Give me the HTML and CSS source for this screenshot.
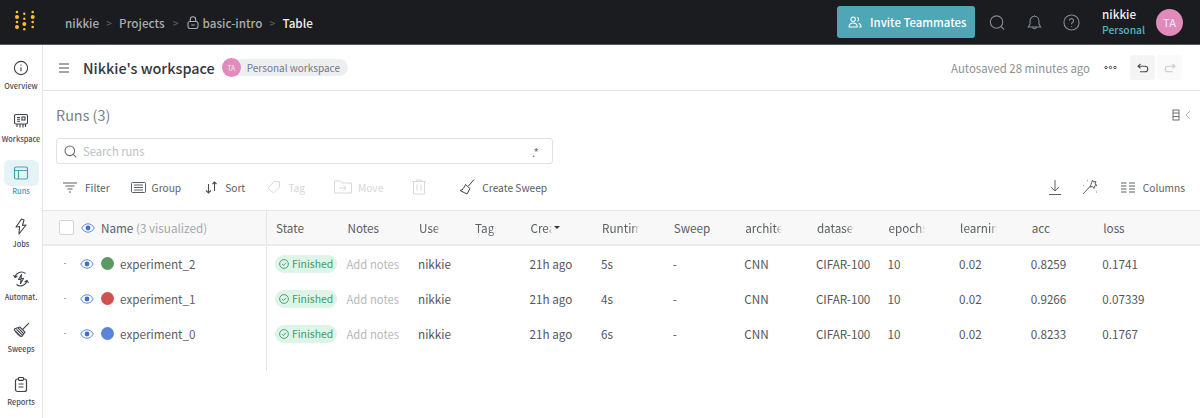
FILE: index.html
```html
<!DOCTYPE html>
<html lang="en">
<head>
  <meta charset="UTF-8">
  <title>basic-intro - Table</title>
  <link rel="stylesheet" href="styles.css">
</head>
<body>
  <header class="topbar">
    <svg class="logo" width="24" height="24" viewBox="0 0 24 24" fill="#fbc02d">
      <circle cx="4" cy="2" r="1.300"/><circle cx="4" cy="7" r="2"/><circle cx="4" cy="12" r="1.300"/><circle cx="4" cy="17" r="2"/>
      <circle cx="11.300" cy="3.700" r="1.200"/><circle cx="11.300" cy="8.700" r="1.200"/><circle cx="11.300" cy="14" r="2"/><circle cx="11.300" cy="19.300" r="1.200"/>
      <circle cx="19.700" cy="2" r="1.300"/><circle cx="19.700" cy="7" r="2"/><circle cx="19.700" cy="12" r="1.300"/><circle cx="19.700" cy="17" r="1.300"/>
    </svg>
    <nav class="crumbs">
      <span>nikkie</span><i class="sep">&gt;</i>
      <span>Projects</span><i class="sep sep-lock">&gt;</i>
      <svg width="12" height="13" viewBox="0 0 12 13" fill="none" stroke="#a9adb3" stroke-width="1.100"><rect x="1" y="5.500" width="10" height="7" rx="2"/><path d="M3.300 5.500V3.500a2.700 2.700 0 0 1 5.400 0v2M4.300 9h3.400"/></svg>
      <span class="crumb-project">basic-intro</span><i class="sep">&gt;</i>
      <b>Table</b>
    </nav>
    <div class="top-right">
      <button class="invite">
        <svg width="14" height="12" viewBox="0 0 15 13" fill="none" stroke="#fff" stroke-width="1.100"><circle cx="5.500" cy="3.500" r="2.400"/><path d="M1 12c0-3 2-4.500 4.500-4.500S10 9 10 12zM10 1.400a2.300 2.300 0 0 1 0 4.300M11.500 7.800c1.500.6 2.500 2 2.500 4.200h-2"/></svg>
        Invite Teammates
      </button>
      <svg class="search-top" width="16" height="17" viewBox="0 0 18 18" fill="none" stroke="#85898f" stroke-width="1.300"><circle cx="8.500" cy="8.500" r="7"/><path d="M13.500 13.500l3.500 3.500"/></svg>
      <svg class="bell-top" width="15" height="17" viewBox="0 0 17 18" fill="none" stroke="#85898f" stroke-width="1.200"><path d="M8.500 2a5 5 0 0 0-5 5v3.500L1.500 14h14l-2-3.500V7a5 5 0 0 0-5-5zM8.500 2V.8M6.300 14.500a2.300 2.300 0 0 0 4.400 0"/></svg>
      <svg class="help-top" width="17" height="17" viewBox="0 0 18 18" fill="none" stroke="#85898f" stroke-width="1.200"><circle cx="9" cy="9" r="8"/><path d="M6.800 7a2.200 2.200 0 1 1 3.300 2c-.8.500-1.100.9-1.100 1.800M9 12.600v1"/></svg>
      <div class="user">
        <div class="user-name">nikkie</div>
        <div class="user-team">Personal</div>
      </div>
      <div class="avatar">TA</div>
    </div>
  </header>

  <div class="layout">
    <aside class="sidebar">
      <a class="side-item">
        <div class="side-icon"><svg width="16" height="16" viewBox="0 0 16 16" fill="none" stroke="#3e4248" stroke-width="1.100"><circle cx="8" cy="8" r="6.600"/><path d="M8 7.200v4M8 4.600v1.100"/></svg></div>
        <span>Overview</span>
      </a>
      <a class="side-item">
        <div class="side-icon"><svg width="16" height="16" viewBox="0 0 16 16" fill="none" stroke="#3e4248" stroke-width="1.100"><rect x="1.500" y="1.500" width="13" height="9.500" rx="1.500"/><path d="M4 4.500h3M4 6.300h3M4 8.200h3"/><rect x="9" y="4" width="3" height="3"/><path d="M4 11v3M7 11v3.500M10 11v3.500M12.500 11v3"/></svg></div>
        <span>Workspace</span>
      </a>
      <a class="side-item side-active">
        <div class="side-icon"><svg width="16" height="16" viewBox="0 0 16 16" fill="none" stroke="#4aa3b3" stroke-width="1.200"><rect x="1.500" y="2" width="13" height="12" rx="1.500"/><path d="M1.500 5.500h13M5.500 5.500V14"/></svg></div>
        <span>Runs</span>
      </a>
      <a class="side-item">
        <div class="side-icon"><svg width="14" height="17" viewBox="0 0 14 17" fill="none" stroke="#3e4248" stroke-width="1.100" stroke-linejoin="round"><path d="M7.500 1L2 9l3.500-.5L5 16l7-9-3.500.5L10 2z"/></svg></div>
        <span>Jobs</span>
      </a>
      <a class="side-item">
        <div class="side-icon"><svg width="18" height="18" viewBox="0 0 18 18" fill="none" stroke="#3e4248" stroke-width="1.100"><path d="M3 7.500a6.500 6.500 0 0 1 10.500-4M15 10.500a6.500 6.500 0 0 1-10.500 4M1.500 5l1.500 2.500L5.500 6M16.500 13L15 10.500 12.500 12"/><path d="M9.500 4.500L6.500 9.500H9l-.5 4 3-5H9z" stroke-linejoin="round"/></svg></div>
        <span>Automat.</span>
      </a>
      <a class="side-item">
        <div class="side-icon"><svg width="18" height="18" viewBox="0 0 16 16" fill="none" stroke="#3e4248" stroke-width="1"><path d="M15 1L9.500 6.500M7 4.500l4.500 4.500-2.500 3.500-1 .5-6-6 .5-1zM4 6.500l5 5M3 8.500l4 4M5.500 5.500l5 5"/></svg></div>
        <span>Sweeps</span>
      </a>
      <a class="side-item">
        <div class="side-icon"><svg width="16" height="17" viewBox="0 0 16 16" fill="none" stroke="#3e4248" stroke-width="1.200"><rect x="2.500" y="2.500" width="11" height="12.500" rx="2"/><rect x="5.500" y="1" width="5" height="2.800" rx=".8" fill="#fff"/><path d="M5.500 7.500h5M5.500 10.500h5"/></svg></div>
        <span>Reports</span>
      </a>
    </aside>

    <main class="main">
      <div class="workspace-bar">
        <svg class="menu-icon" width="12" height="10" viewBox="0 0 12 10" stroke="#4a4e54" stroke-width="1.100"><path d="M1 1h10M1 5h10M1 9h10"/></svg>
        <h1>Nikkie's workspace</h1>
        <div class="ws-pill"><span class="ws-avatar">TA</span>Personal workspace</div>
        <div class="ws-right">
          <span class="autosaved">Autosaved 28 minutes ago</span>
          <svg class="dots" width="13" height="5" viewBox="0 0 13 5" fill="none" stroke="#4a4e54" stroke-width="1"><circle cx="2" cy="2.500" r="1.200"/><circle cx="6.500" cy="2.500" r="1.200"/><circle cx="11" cy="2.500" r="1.200"/></svg>
          <div class="undo-btn">
            <svg width="12" height="10" viewBox="0 0 12 10" fill="none" stroke="#4a4e54" stroke-width="1.100"><path d="M3.500 1L1 3.200l2.500 2.200M1 3.200h7a2.800 2.800 0 0 1 0 5.600H3"/></svg>
          </div>
          <div class="undo-btn redo-btn">
            <svg width="12" height="10" viewBox="0 0 12 10" fill="none" stroke="#c8cacd" stroke-width="1.100"><path d="M8.500 1L11 3.200 8.500 5.400M11 3.200H4a2.800 2.800 0 0 0 0 5.600h5"/></svg>
          </div>
        </div>
      </div>

      <div class="runs-head">
        <h2>Runs (3)</h2>
        <div class="runs-collapse">
          <svg width="8" height="12" viewBox="0 0 8 12" fill="none" stroke="#6b6f75" stroke-width="1"><rect x="1" y="1" width="6" height="10"/><path d="M1 4h6M1 7.500h6"/></svg>
          <svg width="6" height="10" viewBox="0 0 6 10" fill="none" stroke="#b5b8bc" stroke-width="1"><path d="M5 1L1 5l4 4"/></svg>
        </div>
      </div>

      <div class="search">
        <svg width="13" height="13" viewBox="0 0 13 13" fill="none" stroke="#6b6f75" stroke-width="1.100"><circle cx="5.800" cy="5.800" r="4.800"/><path d="M9.300 9.300l3 3"/></svg>
        <span class="search-text">Search runs</span>
        <span class="regex">.*</span>
      </div>

      <div class="toolbar">
        <div class="tool tool-filter">
          <svg width="14" height="11" viewBox="0 0 14 11" stroke="#5a5e64" stroke-width="1"><path d="M0 1h14M2.500 4h9M4.500 7h5M6 10h2"/></svg>Filter
        </div>
        <div class="tool tool-group">
          <svg width="15" height="11" viewBox="0 0 15 11" fill="none" stroke="#5a5e64" stroke-width="1"><rect x=".5" y=".5" width="14" height="10" rx="1"/><path d="M3 3h9M3 5.500h9M3 8h9"/></svg>Group
        </div>
        <div class="tool tool-sort">
          <svg width="13" height="13" viewBox="0 0 13 13" fill="none" stroke="#4a4e54" stroke-width="1.100"><path d="M3.500 3v9M1 9.500l2.500 2.500L6 9.500M9.500 10V1M7.500 3L9.500 1l2 2"/></svg>Sort
        </div>
        <div class="tool tool-tag tool-off">
          <svg width="14" height="14" viewBox="0 0 14 14" fill="none" stroke="#d6d8da" stroke-width="1"><path d="M1 8l6-6.500h5.500V7L6.500 13zM10 3.500v.5"/></svg>Tag
        </div>
        <div class="tool tool-move tool-off">
          <svg width="18" height="14" viewBox="0 0 18 14" fill="none" stroke="#d6d8da" stroke-width="1"><path d="M.5 13V1h6l1.500 2h9.500v10zM5 8h7M9.500 5.500L12 8l-2.500 2.500"/></svg>Move
        </div>
        <div class="tool tool-trash tool-off">
          <svg width="14" height="16" viewBox="0 0 14 16" fill="none" stroke="#d6d8da" stroke-width="1"><path d="M0 2.500h14M4.500 2.500V1h5v1.500M1.500 2.500V15h11V2.500M5 5.500v6M9 5.500v6"/></svg>
        </div>
        <div class="tool tool-sweep">
          <svg width="16" height="16" viewBox="0 0 16 16" fill="none" stroke="#3e4248" stroke-width="1"><path d="M15 .5L9.500 7M6.500 5.500L11 9.500 8 15l-7-3.500c2.500-.5 4-2.500 5.500-6zM4 10l-1 1"/></svg>Create Sweep
        </div>
        <div class="tool-right">
          <svg class="tool-download" width="12" height="15" viewBox="0 0 12 15" fill="none" stroke="#5a5e64" stroke-width="1"><path d="M6 0v11M1.800 7L6 11l4.200-4M0 14.500h12"/></svg>
          <svg class="tool-wand" width="17" height="16" viewBox="0 0 17 16" fill="none" stroke="#5a5e64" stroke-width="1"><path d="M1 15l7.500-8M10.500 1l1 2 2.500-.5-1 2.500 2 1.500-2.500.5-.5 2.500-1.500-2-2.500.5 1-2.500z"/><path d="M1 6.500h.5M5 1.500h.5M14 13h.5" stroke-width="1.300"/></svg>
          <div class="tool">
            <svg width="14" height="11" viewBox="0 0 14 11" stroke="#5a5e64" stroke-width="1"><path d="M0 1h5.500M0 4h5.500M0 7h5.500M0 10h5.500M8 1h6M8 4h6M8 7h6M8 10h6"/></svg>Columns
          </div>
        </div>
      </div>

      <div class="table">
        <div class="table-row table-head">
          <div class="name-col">
            <span class="check"></span>
            <svg class="eye" width="14" height="10" viewBox="0 0 14 10"><path d="M.7 5C2.500 2 4.500.8 7 .8S11.500 2 13.300 5C11.500 8 9.500 9.200 7 9.200S2.500 8 .7 5z" fill="none" stroke="#5b86d6" stroke-width="1"/><circle cx="7" cy="5" r="2.400" fill="#3f6fc9"/></svg>
            <span class="name-label">Name <em>(3 visualized)</em></span>
          </div>
          <div class="cell"><span>State</span></div>
          <div class="cell"><span>Notes</span></div>
          <div class="cell"><span class="clip clip-short">User</span></div>
          <div class="cell"><span class="clip clip-short">Tags</span></div>
          <div class="cell"><span class="clip clip-short">Created</span><i class="caret"></i></div>
          <div class="cell"><span class="clip">Runtime</span></div>
          <div class="cell"><span>Sweep</span></div>
          <div class="cell"><span class="clip">architecture</span></div>
          <div class="cell"><span class="clip">dataset</span></div>
          <div class="cell"><span class="clip">epochs</span></div>
          <div class="cell"><span class="clip">learning_rate</span></div>
          <div class="cell"><span>acc</span></div>
          <div class="cell"><span>loss</span></div>
        </div>

        <div class="table-row">
          <div class="name-col">
            <i class="tick"></i>
            <svg class="eye" width="14" height="10" viewBox="0 0 14 10"><path d="M.7 5C2.500 2 4.500.8 7 .8S11.500 2 13.300 5C11.500 8 9.500 9.200 7 9.200S2.500 8 .7 5z" fill="none" stroke="#5b86d6" stroke-width="1"/><circle cx="7" cy="5" r="2.400" fill="#3f6fc9"/></svg>
            <i class="dot dot-green"></i>
            <span class="run-name">experiment_2</span>
          </div>
          <div class="cell"><span class="status"><svg width="10" height="10" viewBox="0 0 10 10" fill="none" stroke="#3f9a6b" stroke-width=".9"><circle cx="5" cy="5" r="4.400"/><path d="M3 5.100l1.500 1.400L7 3.800"/></svg>Finished</span></div>
          <div class="cell notes">Add notes</div>
          <div class="cell">nikkie</div>
          <div class="cell"></div>
          <div class="cell">21h ago</div>
          <div class="cell">5s</div>
          <div class="cell">-</div>
          <div class="cell">CNN</div>
          <div class="cell">CIFAR-100</div>
          <div class="cell">10</div>
          <div class="cell">0.02</div>
          <div class="cell">0.8259</div>
          <div class="cell">0.1741</div>
        </div>

        <div class="table-row">
          <div class="name-col">
            <i class="tick"></i>
            <svg class="eye" width="14" height="10" viewBox="0 0 14 10"><path d="M.7 5C2.500 2 4.500.8 7 .8S11.500 2 13.300 5C11.500 8 9.500 9.200 7 9.200S2.500 8 .7 5z" fill="none" stroke="#5b86d6" stroke-width="1"/><circle cx="7" cy="5" r="2.400" fill="#3f6fc9"/></svg>
            <i class="dot dot-red"></i>
            <span class="run-name">experiment_1</span>
          </div>
          <div class="cell"><span class="status"><svg width="10" height="10" viewBox="0 0 10 10" fill="none" stroke="#3f9a6b" stroke-width=".9"><circle cx="5" cy="5" r="4.400"/><path d="M3 5.100l1.500 1.400L7 3.800"/></svg>Finished</span></div>
          <div class="cell notes">Add notes</div>
          <div class="cell">nikkie</div>
          <div class="cell"></div>
          <div class="cell">21h ago</div>
          <div class="cell">4s</div>
          <div class="cell">-</div>
          <div class="cell">CNN</div>
          <div class="cell">CIFAR-100</div>
          <div class="cell">10</div>
          <div class="cell">0.02</div>
          <div class="cell">0.9266</div>
          <div class="cell">0.07339</div>
        </div>

        <div class="table-row">
          <div class="name-col">
            <i class="tick"></i>
            <svg class="eye" width="14" height="10" viewBox="0 0 14 10"><path d="M.7 5C2.500 2 4.500.8 7 .8S11.500 2 13.300 5C11.500 8 9.500 9.200 7 9.200S2.500 8 .7 5z" fill="none" stroke="#5b86d6" stroke-width="1"/><circle cx="7" cy="5" r="2.400" fill="#3f6fc9"/></svg>
            <i class="dot dot-blue"></i>
            <span class="run-name">experiment_0</span>
          </div>
          <div class="cell"><span class="status"><svg width="10" height="10" viewBox="0 0 10 10" fill="none" stroke="#3f9a6b" stroke-width=".9"><circle cx="5" cy="5" r="4.400"/><path d="M3 5.100l1.500 1.400L7 3.800"/></svg>Finished</span></div>
          <div class="cell notes">Add notes</div>
          <div class="cell">nikkie</div>
          <div class="cell"></div>
          <div class="cell">21h ago</div>
          <div class="cell">6s</div>
          <div class="cell">-</div>
          <div class="cell">CNN</div>
          <div class="cell">CIFAR-100</div>
          <div class="cell">10</div>
          <div class="cell">0.02</div>
          <div class="cell">0.8233</div>
          <div class="cell">0.1767</div>
        </div>

        <div class="table-row table-rest">
          <div class="name-col"></div>
        </div>
      </div>
    </main>
  </div>
</body>
</html>
```

FILE: styles.css
```css
* {
  box-sizing: border-box;
}
html, body {
  margin: 0;
  height: 418px;
  overflow: hidden;
}
body {
  font-family: "Noto Sans CJK JP", "Noto Sans", sans-serif;
  font-size: 11.700px;
  color: #53575c;
  background: #fff;
}
h1, h2 {
  margin: 0;
  font-weight: 400;
}
i, em {
  font-style: normal;
}

/* top bar */
.topbar {
  display: flex;
  align-items: center;
  height: 45px;
  padding-left: 13px;
  background: #1a1c1f;
  border-bottom: 1px solid #5a5c5f;
}
.logo {
  flex: none;
}
.crumbs {
  display: flex;
  align-items: center;
  margin-left: 28px;
  color: #a9adb3;
  font-size: 11.700px;
  font-weight: 500;
}
.crumbs b {
  color: #eef0f2;
  font-weight: 500;
}
.sep {
  width: 20px;
  color: #5f6368;
  font-size: 10px;
  text-align: center;
}
.sep-lock {
  width: 22px;
}
.crumb-project {
  margin-left: 4px;
}
.top-right {
  display: flex;
  align-items: center;
  margin-left: auto;
  padding-right: 17px;
}
.invite {
  display: flex;
  align-items: center;
  gap: 8px;
  width: 138px;
  height: 32px;
  padding: 0 0 0 11px;
  border: 0;
  border-radius: 3px;
  background: #4ea6b7;
  color: #fff;
  font: 500 11.400px "Noto Sans CJK JP", "Noto Sans", sans-serif;
  white-space: nowrap;
}
.search-top {
  margin-left: 14px;
}
.bell-top {
  margin-left: 22px;
}
.help-top {
  margin-left: 21px;
}
.user {
  width: 42px;
  margin-left: 22px;
  line-height: 16px;
  font-weight: 500;
}
.user-name {
  color: #eef0f2;
}
.user-team {
  color: #56b3c4;
  font-size: 10.300px;
}
.avatar {
  display: flex;
  align-items: center;
  justify-content: center;
  width: 27px;
  height: 27px;
  margin-left: 12px;
  border-radius: 50%;
  background: #e08bbc;
  color: #fbe9f3;
  font-size: 11px;
}

/* sidebar */
.layout {
  display: flex;
  height: 373px;
}
.sidebar {
  flex: none;
  display: flex;
  flex-direction: column;
  align-items: center;
  width: 43px;
  padding-top: 10px;
  border-right: 1px solid #e4e5e7;
}
.side-item {
  flex: none;
  display: flex;
  flex-direction: column;
  align-items: center;
  width: 35px;
  margin-bottom: 16.700px;
  color: #4a4e54;
  font-size: 7.400px;
  font-weight: 500;
  line-height: 10px;
  white-space: nowrap;
}
.side-icon {
  display: flex;
  align-items: center;
  justify-content: center;
  width: 35px;
  height: 26px;
  border-radius: 6px;
}
.side-active {
  color: #3f9cae;
}
.side-active .side-icon {
  background: #e4f3f6;
}

/* workspace header */
.main {
  flex: 1;
  min-width: 0;
}
.workspace-bar {
  display: flex;
  align-items: center;
  height: 46px;
  padding: 0 18px 0 15px;
  border-bottom: 1px solid #e4e5e7;
}
.workspace-bar h1 {
  margin-left: 13px;
  color: #33373c;
  font-size: 14.400px;
  font-weight: 500;
}
.ws-pill {
  display: flex;
  align-items: center;
  height: 17px;
  margin-left: 7px;
  padding-right: 8px;
  border-radius: 9px;
  background: #eceef2;
  color: #75797f;
  font-size: 10px;
}
.ws-avatar {
  display: flex;
  align-items: center;
  justify-content: center;
  width: 19px;
  height: 19px;
  margin-right: 6px;
  border-radius: 50%;
  background: #e08bbc;
  color: #fbe9f3;
  font-size: 7px;
}
.ws-right {
  display: flex;
  align-items: center;
  margin-left: auto;
}
.autosaved {
  color: #8c9096;
  font-size: 11.400px;
}
.dots {
  margin: 0 13px 0 14px;
}
.undo-btn {
  display: flex;
  align-items: center;
  justify-content: center;
  width: 25px;
  height: 25px;
  border-radius: 3px;
  background: #f4f4f5;
}
.redo-btn {
  margin-left: 2px;
  background: #fafafa;
}

/* runs panel */
.runs-head {
  display: flex;
  align-items: center;
  justify-content: space-between;
  height: 47px;
  padding: 4px 9px 4px 13px;
}
.runs-head h2 {
  color: #7b7f85;
  font-size: 14.400px;
}
.runs-collapse {
  display: flex;
  align-items: center;
  gap: 5px;
}
.search {
  display: flex;
  align-items: center;
  width: 497px;
  height: 26px;
  margin-left: 13px;
  padding: 0 13px 0 7px;
  border: 1px solid #dfe0e2;
  border-radius: 3px;
}
.search-text {
  margin-left: 6px;
  color: #bdc0c4;
  font-size: 11.200px;
}
.regex {
  margin-left: auto;
  color: #6b6f75;
}
.toolbar {
  display: flex;
  align-items: center;
  height: 46px;
  padding-right: 15px;
  font-size: 10.200px;
  color: #5a5e64;
}
.tool {
  display: flex;
  align-items: center;
  gap: 7px;
  white-space: nowrap;
}
.tool-filter {
  margin-left: 20px;
  gap: 8px;
}
.tool-group {
  margin-left: 21px;
  gap: 6px;
}
.tool-sort {
  margin-left: 24px;
  gap: 7px;
}
.tool-tag {
  margin-left: 22px;
  gap: 7px;
}
.tool-move {
  margin-left: 29px;
  gap: 6px;
}
.tool-trash {
  margin-left: 29px;
}
.tool-sweep {
  margin-left: 33px;
}
.tool-off {
  color: #d6d8da;
}
.tool-right {
  display: flex;
  align-items: center;
  margin-left: auto;
}
.tool-wand {
  margin-left: 21px;
}
.tool-right .tool {
  margin-left: 22px;
  gap: 8px;
}

/* table */
.table {
  border-top: 1px solid #e4e5e7;
}
.table-row {
  display: grid;
  grid-template-columns: 224px 71.500px 71.500px 56px 55.500px repeat(9, 71.600px);
  height: 35px;
  align-items: center;
}
.table-head {
  background: #f8f8f8;
  border-bottom: 2px solid #e9eaeb;
  color: #5a5e64;
}
.name-col {
  display: flex;
  align-items: center;
  height: 100%;
  border-right: 1px solid #e4e5e7;
}
.table-rest {
  height: 20px;
}
.check {
  width: 15px;
  height: 15px;
  margin-left: 16px;
  border: 1px solid #d5d6d8;
  border-radius: 2px;
  background: #fff;
}
.table-head .eye {
  margin-left: 7px;
}
.name-label {
  margin-left: 6px;
}
.name-label em {
  color: #a4a7ac;
}
.tick {
  width: 2px;
  height: 1px;
  margin-left: 21px;
  background: #a4a7ac;
}
.table-row .tick + .eye {
  margin-left: 14px;
}
.dot {
  width: 13px;
  height: 13px;
  margin-left: 7px;
  border-radius: 50%;
}
.dot-green {
  background: #5a9a62;
}
.dot-red {
  background: #cf5250;
}
.dot-blue {
  background: #5a84dc;
}
.run-name {
  margin-left: 6px;
  color: #5a5e64;
}
.cell {
  display: flex;
  align-items: center;
  padding-left: 8px;
  white-space: nowrap;
  overflow: hidden;
}
.table-head .cell {
  padding-left: 9px;
}
.clip {
  display: block;
  width: 37px;
  overflow: hidden;
  -webkit-mask-image: linear-gradient(to right, #000 82%, transparent);
}
.clip-short {
  width: 21px;
}
.caret {
  width: 0;
  height: 0;
  margin-left: 2px;
  border: 3px solid transparent;
  border-top: 3px solid #33373c;
  border-bottom: 0;
}
.notes {
  color: #b5b8bc;
  font-size: 11.300px;
}
.status {
  display: flex;
  align-items: center;
  gap: 3px;
  height: 18px;
  width: 62px;
  padding-left: 4px;
  border-radius: 9px;
  background: #ddf4e7;
  color: #3f9a6b;
  font-size: 10.400px;
}
.status svg {
  flex: none;
}
```
